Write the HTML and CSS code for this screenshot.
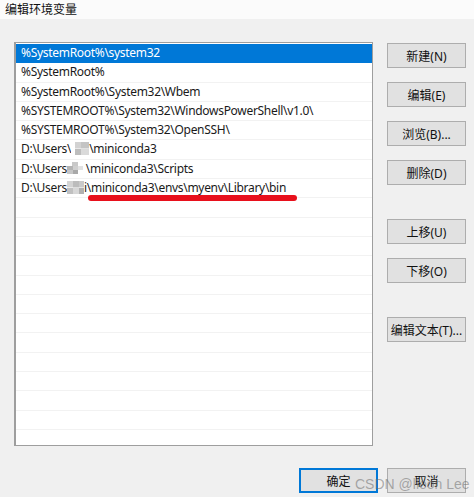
FILE: index.html
```html
<!DOCTYPE html>
<html lang="zh-CN">
<head>
<meta charset="utf-8">
<title>编辑环境变量</title>
<link rel="stylesheet" href="styles.css">
</head>
<body>
<div class="window">
  <div class="titlebar">编辑环境变量</div>
  <div class="content">
    <div class="listbox">
      <div class="row selected">%SystemRoot%\system32</div>
      <div class="row">%SystemRoot%</div>
      <div class="row">%SystemRoot%\System32\Wbem</div>
      <div class="row">%SYSTEMROOT%\System32\WindowsPowerShell\v1.0\</div>
      <div class="row">%SYSTEMROOT%\System32\OpenSSH\</div>
      <div class="row">D:\Users\<span class="mosaic m1"></span>\miniconda3</div>
      <div class="row">D:\Users<span class="mosaic m2"></span>&nbsp;\miniconda3\Scripts</div>
      <div class="row">D:\Users<span class="mosaic m3"></span>i\miniconda3\envs\myenv\Library\bin</div>
      <div class="row"></div>
      <div class="row"></div>
      <div class="row"></div>
      <div class="row"></div>
      <div class="row"></div>
      <div class="row"></div>
      <div class="row"></div>
      <div class="row"></div>
      <div class="row"></div>
      <div class="row"></div>
      <div class="row"></div>
      <div class="row"></div>
      <div class="row"></div>
      <div class="row"></div>
      <div class="underline"></div>
    </div>
    <div class="buttons">
      <div class="group">
        <button class="btn">新建(N)</button>
        <button class="btn">编辑(E)</button>
        <button class="btn">浏览(B)...</button>
        <button class="btn">删除(D)</button>
      </div>
      <div class="group">
        <button class="btn">上移(U)</button>
        <button class="btn">下移(O)</button>
      </div>
      <div class="group">
        <button class="btn">编辑文本(T)...</button>
      </div>
    </div>
  </div>
  <div class="footer">
    <button class="btn default">确定</button>
    <button class="btn">取消</button>
  </div>
  <div class="watermark">CSDN @lleon Lee</div>
</div>
</body>
</html>
```

FILE: styles.css
```css
html, body {
  margin: 0;
  padding: 0;
}
body {
  width: 474px;
  height: 497px;
  overflow: hidden;
  background: #f0f0f0;
  font-family: "Noto Sans", "Noto Sans CJK SC", sans-serif;
  font-size: 12px;
  color: #000;
}
.window {
  position: relative;
  width: 474px;
  height: 497px;
  box-sizing: border-box;
  background: #f0f0f0;
  display: flex;
  flex-direction: column;
}
.titlebar {
  height: 19px;
  background: #fbfbfb;
  padding-left: 5px;
  line-height: 19px;
  font-size: 12px;
  color: #111;
}
.content {
  display: flex;
  padding: 23px 0 0 14px;
  gap: 14px;
}
.listbox {
  position: relative;
  width: 359px;
  height: 404px;
  box-sizing: border-box;
  border: 1px solid #9e9e9e;
  border-left-width: 2px;
  background: #fff;
  padding-top: 1px;
  overflow: hidden;
}
.row {
  height: 19.3px;
  box-sizing: border-box;
  border-bottom: 1px solid #f2f2f2;
  padding-left: 5px;
  line-height: 18px;
  white-space: nowrap;
  color: #1a1a1a;
  letter-spacing: -0.3px;
}
.row.selected {
  background: #0078d7;
  color: #fff;
  border-bottom-color: #0078d7;
}
.mosaic {
  display: inline-block;
  vertical-align: -2px;
  height: 13px;
}
.m1 {
  width: 18px;
  background:
    linear-gradient(90deg, #fff 0 25%, #d2d2d2 25% 55%, #c4c4c4 55% 100%) top / 100% 50% no-repeat,
    linear-gradient(90deg, #fff 0 25%, #bdbdbd 25% 55%, #dadada 55% 100%) bottom / 100% 50% no-repeat;
}
.m2 {
  width: 16px;
  background:
    linear-gradient(90deg, #fff 0 30%, #c9c9c9 30% 70%, #fff 70% 100%) top / 100% 34% no-repeat,
    linear-gradient(90deg, #b4b4b4 0 40%, #cfcfcf 40% 70%, #e1e1e1 70% 100%) center / 100% 34% no-repeat,
    linear-gradient(90deg, #c6c6c6 0 40%, #a9a9a9 40% 70%, #fff 70% 100%) bottom / 100% 34% no-repeat;
}
.m3 {
  width: 17px;
  background:
    linear-gradient(90deg, #d3d3d3 0 35%, #bcbcbc 35% 70%, #c9c9c9 70% 100%) top / 100% 50% no-repeat,
    linear-gradient(90deg, #c0c0c0 0 35%, #d7d7d7 35% 70%, #b1b1b1 70% 100%) bottom / 100% 50% no-repeat;
}
.underline {
  position: absolute;
  left: 72px;
  top: 152px;
  width: 209px;
  height: 6px;
  border-radius: 3px;
  background: #e8101c;
}
.buttons {
  display: flex;
  flex-direction: column;
  gap: 34px;
  padding-top: 1px;
}
.group {
  display: flex;
  flex-direction: column;
  gap: 14px;
}
.btn {
  width: 79px;
  height: 25px;
  box-sizing: border-box;
  border: 1px solid #adadad;
  background: #e1e1e1;
  font-family: "Noto Sans", "Noto Sans CJK SC", sans-serif;
  font-size: 12px;
  color: #111;
  padding: 0;
  margin: 0;
}
.footer {
  display: flex;
  justify-content: flex-end;
  gap: 9px;
  padding: 22px 8px 0 0;
}
.btn.default {
  border: 2px solid #0078d7;
}
.watermark {
  position: absolute;
  left: 355px;
  top: 476px;
  font-family: "Liberation Sans", sans-serif;
  font-size: 14px;
  color: rgba(110, 110, 110, 0.55);
  white-space: nowrap;
  pointer-events: none;
}
```
